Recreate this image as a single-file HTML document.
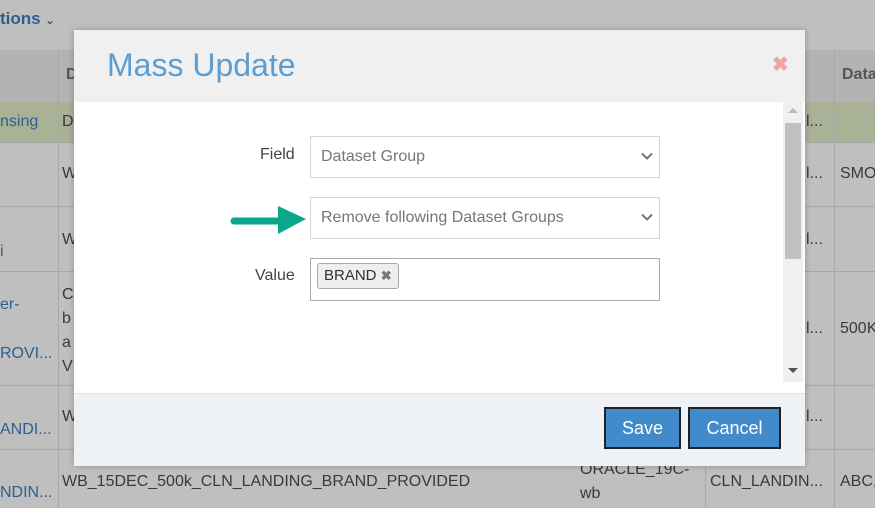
<!DOCTYPE html>
<html><head><style>
*{margin:0;padding:0;box-sizing:border-box}
body{width:875px;height:508px;overflow:hidden;background:#bfbfbf;font-family:"Liberation Sans",sans-serif;position:relative;color:#444}
.a{position:absolute}
.t{font-size:16px;color:#3a3a3a;white-space:nowrap}
.b{color:#2e5f8f}
.vl{position:absolute;width:1px;background:#a8a8a8}
.hl{position:absolute;height:1px;background:#a8a8a8;left:0;width:875px}
.sel{position:absolute;left:310px;width:350px;height:42px;border:1px solid #d4d4d4;background:#fff;font-size:16px;color:#777;padding:11px 10px;white-space:nowrap}
.chev{position:absolute;right:6px;top:15px}
.btn{position:absolute;top:407px;height:42px;background:#428bca;border:2px solid #222;color:#fff;font-size:18px;text-align:center;line-height:38px}
</style></head><body>
<div class="a b" style="left:0;top:9px;font-size:17px;font-weight:bold;color:#2e5f8f">tions <span style="font-size:11px">&#8964;</span></div>
<div class="a" style="left:0;top:50px;width:875px;height:52px;background:#b3b3b3"></div>
<div class="a" style="left:0;top:102px;width:875px;height:40px;background:#a9b197"></div>
<div class="vl" style="left:58px;top:50px;height:458px"></div>
<div class="vl" style="left:705px;top:50px;height:458px"></div>
<div class="vl" style="left:834px;top:50px;height:458px"></div>
<div class="hl" style="top:142px"></div><div class="hl" style="top:206px"></div><div class="hl" style="top:271px"></div><div class="hl" style="top:385px"></div><div class="hl" style="top:449px"></div>
<div class="a t" style="left:66px;top:66px;font-weight:bold;color:#555">D</div>
<div class="a t" style="left:842px;top:66px;font-weight:bold;color:#555">Data</div>
<div class="a t b" style="left:0;top:113px">nsing</div>
<div class="a t" style="left:62px;top:113px">D</div>
<div class="a t" style="left:62px;top:165px">W</div>
<div class="a t" style="left:62px;top:231px">W</div>
<div class="a t b" style="left:0;top:243px">i</div>
<div class="a t b" style="left:0;top:296px">er-</div>
<div class="a t b" style="left:0;top:345px">ROVI...</div>
<div class="a t" style="left:62px;top:283px;line-height:24px">C<br>b<br>a<br>V</div>
<div class="a t" style="left:62px;top:408px">W</div>
<div class="a t b" style="left:0;top:421px">ANDI...</div>
<div class="a t b" style="left:0;top:484px">NDIN...</div>
<div class="a t" style="left:62px;top:473px">WB_15DEC_500k_CLN_LANDING_BRAND_PROVIDED</div>
<div class="a t" style="left:580px;top:458px;line-height:24px">ORACLE_19C-<br>wb</div>
<div class="a t" style="left:710px;top:473px">CLN_LANDIN...</div>
<div class="a t" style="left:840px;top:473px">ABC,</div>
<div class="a t" style="left:840px;top:165px">SMO</div>
<div class="a t" style="left:840px;top:320px">500K</div>
<div class="a t" style="left:806px;top:113px">l...</div><div class="a t" style="left:806px;top:165px">l...</div><div class="a t" style="left:806px;top:231px">l...</div><div class="a t" style="left:806px;top:320px">l...</div><div class="a t" style="left:806px;top:408px">l...</div>

<div class="a" style="left:74px;top:30px;width:731px;height:436px;background:#fff;box-shadow:0 0 6px rgba(0,0,0,.25)">
 <div class="a" style="left:0;top:0;width:731px;height:72px;background:#f0f0f0"></div>
 <div class="a" style="left:33px;top:17px;font-size:32px;color:#5d9dd0">Mass Update</div>
 <div class="a" style="left:698px;top:22px;font-size:20px;font-weight:bold;color:#e8a8a0">&#10006;</div>
 <div class="a" style="left:0;top:363px;width:731px;height:73px;background:#eef1f5;border-top:1px solid #e2e6ea"></div>
 <div class="a" style="left:709px;top:72px;width:20px;height:280px;background:#f0f0f0"></div>
 <div class="a" style="left:711px;top:93px;width:16px;height:136px;background:#c0c0c0"></div>
 <div class="a" style="left:714px;top:78px;width:0;height:0;border:5px solid transparent;border-bottom-color:#bbb;border-top:0"></div>
 <div class="a" style="left:714px;top:338px;width:0;height:0;border:5px solid transparent;border-top-color:#555;border-bottom:0"></div>
</div>
<div class="a t" style="left:260px;top:146px;color:#444">Field</div>
<div class="sel" style="top:136px">Dataset Group<svg class="chev" width="12" height="9" viewBox="0 0 12 9"><path d="M1 1.5l5 5 5-5" fill="none" stroke="#777" stroke-width="2"/></svg></div>
<div class="sel" style="top:197px">Remove following Dataset Groups<svg class="chev" width="12" height="9" viewBox="0 0 12 9"><path d="M1 1.5l5 5 5-5" fill="none" stroke="#777" stroke-width="2"/></svg></div>
<svg class="a" style="left:228px;top:203px" width="80" height="36" viewBox="0 0 80 36"><path d="M6 18H52" stroke="#0aa88a" stroke-width="7" stroke-linecap="round"/><path d="M50 3L78 16L50 31Z" fill="#0aa88a"/></svg>
<div class="a t" style="left:255px;top:267px;color:#444">Value</div>
<div class="a" style="left:310px;top:258px;width:350px;height:43px;border:1px solid #aaa;background:#fff"></div>
<div class="a" style="left:317px;top:263px;height:26px;border:1px solid #aaa;border-radius:3px;background:#eee;font-size:15px;color:#333;padding:3px 6px;white-space:nowrap;line-height:18px">BRAND <span style="color:#777;font-size:13px;font-weight:bold">&#10006;</span></div>
<div class="btn" style="left:604px;width:77px">Save</div>
<div class="btn" style="left:688px;width:93px">Cancel</div>
</body></html>
